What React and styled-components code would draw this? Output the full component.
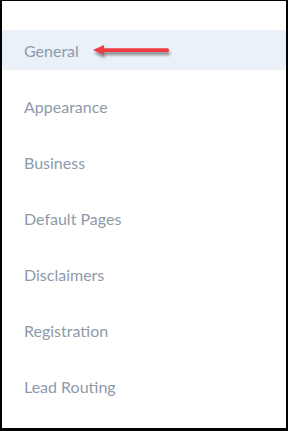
import React from "react";
import styled, { createGlobalStyle } from "styled-components";

const Global = createGlobalStyle`
  html, body { margin: 0; padding: 0; background: #fff; }
  #root { width: 288px; height: 431px; }
`;

const Frame = styled.div`
  box-sizing: border-box;
  width: 288px;
  height: 431px;
  border: 2px solid #000;
  border-top-width: 1px;
  border-bottom-width: 3px;
  background: #fff;
  padding-top: 29px;
`;

const Menu = styled.ul`
  list-style: none;
  margin: 0;
  padding: 0;
  display: flex;
  flex-direction: column;
  gap: 16px;
`;

const Item = styled.li`
  position: relative;
  height: 40px;
  display: flex;
  align-items: center;
  padding-left: 22px;
  background: ${(p) => (p.$active ? "#eaf1f8" : "transparent")};
  font-family: Lato, "Open Sans", sans-serif;
  font-size: 16px;
  color: #8d9aab;
`;

const Arrow = styled.svg`
  position: absolute;
  left: 88px;
  top: 11px;
  overflow: visible;
`;

const items = [
  "General",
  "Appearance",
  "Business",
  "Default Pages",
  "Disclaimers",
  "Registration",
  "Lead Routing",
];

export default function App() {
  return (
    <>
      <Global />
      <Frame>
        <Menu>
          {items.map((t, i) => (
            <Item key={t} $active={i === 0}>
              {t}
              {i === 0 && (
                <Arrow width="82" height="20" viewBox="0 0 82 20">
                  <defs>
                    <filter id="sh" x="-20%" y="-50%" width="140%" height="200%">
                      <feGaussianBlur in="SourceAlpha" stdDeviation="1.5" />
                      <feOffset dx="1" dy="3" result="b" />
                      <feComponentTransfer>
                        <feFuncA type="linear" slope="0.45" />
                      </feComponentTransfer>
                      <feMerge>
                        <feMergeNode />
                        <feMergeNode in="SourceGraphic" />
                      </feMerge>
                    </filter>
                  </defs>
                  <g filter="url(#sh)" fill="#f03c42">
                    <polygon points="3,9 14,4 14,14" />
                    <rect x="12" y="7.2" width="67" height="3.8" rx="1.5" />
                  </g>
                </Arrow>
              )}
            </Item>
          ))}
        </Menu>
      </Frame>
    </>
  );
}
